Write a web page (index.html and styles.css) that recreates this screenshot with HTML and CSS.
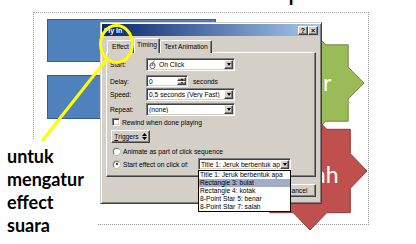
FILE: index.html
```html
<!DOCTYPE html>
<html lang="en">
<head>
    <meta charset="UTF-8">
    <meta name="viewport" content="width=device-width, initial-scale=1.0">
    <title>Fly In</title>
    <link rel="stylesheet" href="styles.css">
</head>
<body>
    <div class="slide">
        <div class="slide-title">Jeruk berbentuk apa</div>
        <div class="slide-frame"></div>
        <div class="rect rect-top"></div>
        <div class="rect rect-bottom"></div>

        <!-- star shapes of the slide, partly hidden by the dialog -->
        <svg class="stars" width="416" height="244" viewBox="0 0 416 244">
            <polygon class="star-green" points="364,83 348.2,67.2 348.2,44.8 325.8,44.8 310,29 294.2,44.8 271.8,44.8 271.8,67.2 256,83 271.8,98.8 271.8,121.2 294.2,121.2 310,137 325.8,121.2 348.2,121.2 348.2,98.8"/>
            <text class="star-text" x="331.5" y="91" text-anchor="end">benar</text>
            <polygon class="star-red" points="367,171 350.3,153.7 350.3,129.3 326.7,129.3 310,112 293.3,129.3 269.7,129.3 269.7,153.7 253,171 269.7,188.3 269.7,212.7 293.3,212.7 310,230 326.7,212.7 350.3,212.7 350.3,188.3"/>
            <text class="star-text" x="338.5" y="183" text-anchor="end">salah</text>
        </svg>

        <div class="dialog">
            <div class="titlebar">
                <span class="title">Fly In</span>
                <span class="title-buttons">
                    <span class="title-btn">?</span>
                    <span class="title-btn">×</span>
                </span>
            </div>
            <div class="tabs">
                <span class="tab tab-effect">Effect</span>
                <span class="tab tab-timing active">Timing</span>
                <span class="tab tab-text">Text Animation</span>
            </div>
            <div class="panel">
                <div class="row row-start">
                    <span class="label">Start:</span>
                    <div class="field select">
                        <svg class="mouse" width="7" height="9" viewBox="0 0 7 9">
                            <path d="M3.5 3 C3.5 1.5 5.5 2 5.5 0.5" fill="none" stroke="#707070"/>
                            <rect x="1" y="3" width="5" height="5.5" rx="2.2" fill="#fff" stroke="#606060"/>
                            <path d="M3.5 3v2.2M1 5.2h5" stroke="#606060" stroke-width="0.8"/>
                        </svg>
                        <span class="value">On Click</span>
                        <span class="drop"><i class="arrow-down"></i></span>
                    </div>
                </div>
                <div class="row row-delay">
                    <span class="label">Delay:</span>
                    <div class="field spin-field">
                        <span class="value">0</span>
                        <span class="spin">
                            <span class="spin-btn"><i class="arrow-up"></i></span>
                            <span class="spin-btn"><i class="arrow-down small"></i></span>
                        </span>
                    </div>
                    <span class="unit">seconds</span>
                </div>
                <div class="row row-speed">
                    <span class="label">Speed:</span>
                    <div class="field select">
                        <span class="value">0,5 seconds (Very Fast)</span>
                        <span class="drop"><i class="arrow-down"></i></span>
                    </div>
                </div>
                <div class="row row-repeat">
                    <span class="label">Repeat:</span>
                    <div class="field select">
                        <span class="value">(none)</span>
                        <span class="drop"><i class="arrow-down"></i></span>
                    </div>
                </div>
                <div class="row row-check">
                    <span class="checkbox"></span>
                    <span>Rewind when done playing</span>
                </div>
                <div class="row row-triggers">
                    <span class="button triggers">
                        <span><u>T</u>riggers</span>
                        <svg width="5" height="7" viewBox="0 0 5 7"><path d="M0 3h5L2.5 0z M0 4h5L2.5 7z"/></svg>
                    </span>
                </div>
                <div class="row row-radio">
                    <span class="radio"></span>
                    <span>Animate as part of click sequence</span>
                </div>
                <div class="row row-radio row-onclick">
                    <span class="radio checked"></span>
                    <span class="radio-label">Start effect on click of:</span>
                    <div class="field select trigger-select">
                        <span class="value">Title 1: Jeruk berbentuk apa</span>
                        <span class="drop"><i class="arrow-down"></i></span>
                        <ul class="dropdown">
                            <li>Title 1: Jeruk berbentuk apa</li>
                            <li class="selected">Rectangle 3: bulat</li>
                            <li>Rectangle 4: kotak</li>
                            <li>8-Point Star 5: benar</li>
                            <li>8-Point Star 7: salah</li>
                        </ul>
                    </div>
                </div>
            </div>
            <div class="actions">
                <span class="button action">OK</span>
                <span class="button action">Cancel</span>
            </div>
        </div>

        <div class="caption">untuk<br>mengatur<br>effect<br>suara</div>

        <!-- yellow highlight drawn over the screenshot -->
        <svg class="marker" width="416" height="244" viewBox="0 0 416 244">
            <ellipse cx="116.5" cy="44" rx="16" ry="18.5"/>
            <line x1="106" y1="60" x2="42" y2="141"/>
        </svg>
    </div>
</body>
</html>
```

FILE: styles.css
```css
* {
    box-sizing: border-box;
}
body {
    margin: 0;
    width: 416px;
    height: 244px;
    overflow: hidden;
    background: #fff;
    font-family: "Liberation Sans", Arial, sans-serif;
}
.slide {
    position: relative;
    width: 416px;
    height: 244px;
}
.slide-title {
    position: absolute;
    left: 75px;
    top: -26px;
    font-family: Lato, sans-serif;
    font-size: 27px;
    line-height: 32px;
    white-space: nowrap;
    color: #000;
}
.slide-frame {
    position: absolute;
    left: 33px;
    top: 12px;
    width: 336px;
    height: 213px;
    border: 1px dotted #9a9a9a;
}
.rect {
    position: absolute;
    left: 47px;
    width: 169px;
    background: #4f81bd;
    border: 1px solid #385d8a;
}
.rect-top {
    top: 19px;
    height: 43px;
}
.rect-bottom {
    top: 75px;
    height: 44px;
}
.stars {
    position: absolute;
    left: 0;
    top: 0;
}
.star-green {
    fill: #9bbb59;
    stroke: #71893f;
}
.star-red {
    fill: #c0504d;
    stroke: #8c3836;
}
.star-text {
    font-family: Lato, sans-serif;
    font-size: 23px;
    fill: #fff;
}

/* dialog */
.dialog {
    position: absolute;
    left: 100px;
    top: 22px;
    width: 222px;
    height: 182px;
    padding: 1px;
    background: #d4d0c8;
    border: 1px solid;
    border-color: #d4d0c8 #404040 #404040 #d4d0c8;
    box-shadow: inset 1px 1px #fff, inset -1px -1px #808080;
    font-size: 6.7px;
    color: #000;
}
.titlebar {
    display: flex;
    align-items: center;
    justify-content: space-between;
    height: 12px;
    padding: 0 2px;
    background: linear-gradient(to right, #0a246a, #a6caf0);
}
.title {
    color: #fff;
    font-weight: bold;
    font-size: 7px;
}
.title-buttons {
    display: flex;
}
.title-btn {
    width: 10px;
    height: 9px;
    display: flex;
    align-items: center;
    justify-content: center;
    background: #d4d0c8;
    border: 1px solid;
    border-color: #fff #404040 #404040 #fff;
    box-shadow: inset -1px -1px #808080;
    font-size: 7px;
    font-weight: bold;
    line-height: 1;
}
.tabs {
    display: flex;
    align-items: flex-end;
    height: 15px;
    margin-top: 2px;
    padding-left: 5px;
}
.tab {
    height: 13px;
    background: #d4d0c8;
    border: 1px solid;
    border-bottom: none;
    border-color: #fff #404040 transparent #fff;
    border-radius: 2px 2px 0 0;
    box-shadow: inset -1px 0 #808080;
    text-align: center;
    line-height: 11px;
}
.tab.active {
    position: relative;
    z-index: 1;
    height: 15px;
    line-height: 12px;
}
.tab-effect {
    width: 27px;
}
.tab-timing {
    width: 26px;
}
.tab-text {
    width: 52px;
}
.panel {
    width: 210px;
    height: 125px;
    margin: -1px 0 0 4px;
    padding: 5px 0 0 3px;
    border: 1px solid;
    border-color: #fff #404040 #404040 #fff;
    box-shadow: inset -1px -1px #808080;
}
.row {
    display: flex;
    align-items: center;
    white-space: nowrap;
}
.label {
    width: 36px;
}
.field {
    position: relative;
    display: flex;
    align-items: center;
    padding: 1px;
    background: #fff;
    border: 1px solid;
    border-color: #808080 #fff #fff #808080;
    box-shadow: inset 1px 1px #404040, inset -1px -1px #d4d0c8;
}
.select {
    width: 89px;
    height: 13px;
}
.value {
    flex: 1;
    overflow: hidden;
    padding-left: 1px;
}
.mouse {
    margin: 0 2px 0 1px;
}
.drop,
.spin-btn,
.button {
    display: flex;
    align-items: center;
    justify-content: center;
    background: #d4d0c8;
    border: 1px solid;
    border-color: #fff #404040 #404040 #fff;
    box-shadow: inset -1px -1px #808080;
}
.drop {
    width: 9px;
    height: 9px;
}
.arrow-down {
    width: 0;
    height: 0;
    border-style: solid;
    border-width: 3px 2.5px 0;
    border-color: #000 transparent transparent;
}
.arrow-up {
    width: 0;
    height: 0;
    border-style: solid;
    border-width: 0 1.5px 2px;
    border-color: transparent transparent #000;
}
.arrow-down.small {
    border-width: 2px 1.5px 0;
}
.row-delay {
    margin-top: 4px;
}
.spin-field {
    width: 42px;
    height: 12px;
}
.spin {
    display: flex;
    flex-direction: column;
}
.spin-btn {
    width: 9px;
    height: 4px;
}
.unit {
    margin-left: 5px;
}
.row-speed {
    margin-top: 1px;
}
.row-repeat {
    margin-top: 2px;
}
.row-check {
    height: 10px;
    margin-top: 1px;
}
.checkbox {
    width: 8px;
    height: 8px;
    margin: 0 2px 0 2px;
    background: #fff;
    border: 1px solid;
    border-color: #808080 #fff #fff #808080;
    box-shadow: inset 1px 1px #404040, inset -1px -1px #d4d0c8;
}
.row-triggers {
    margin-top: 3px;
}
.triggers {
    width: 39px;
    height: 13px;
    margin-left: 1px;
    gap: 3px;
}
.row-radio {
    height: 10px;
    margin-top: 3px;
}
.row-onclick {
    height: 12px;
    margin-top: 2px;
}
.radio {
    position: relative;
    width: 7px;
    height: 7px;
    margin: 0 3px;
    border-radius: 50%;
    background: #fff;
    border: 1px solid;
    border-color: #808080 #fff #fff #808080;
    box-shadow: 0 0 0 0.4px #a0a0a0;
}
.radio.checked::after {
    content: "";
    position: absolute;
    left: 1.5px;
    top: 1.5px;
    width: 2px;
    height: 2px;
    border-radius: 50%;
    background: #000;
}
.radio-label {
    width: 75px;
}
.trigger-select {
    width: 93px;
    height: 12px;
}
.dropdown {
    position: absolute;
    left: -1px;
    top: 11px;
    z-index: 2;
    width: 93px;
    height: 42px;
    margin: 0;
    padding: 0;
    list-style: none;
    background: #fff;
    border: 1px solid #000;
}
.dropdown li {
    height: 8px;
    line-height: 8px;
    padding-left: 1px;
    white-space: nowrap;
    overflow: hidden;
}
.dropdown .selected {
    background: #a2acc8;
}
.actions {
    display: flex;
    justify-content: flex-end;
    gap: 4px;
    margin: 7px 4px 0 0;
}
.action {
    width: 38px;
    height: 13px;
}

/* caption on the slide */
.caption {
    position: absolute;
    left: 0;
    top: 140px;
    width: 97px;
    height: 104px;
    padding: 5px 0 0 7px;
    background: #fff;
    font-family: Lato, sans-serif;
    font-weight: 700;
    font-size: 18px;
    line-height: 23px;
    color: #000;
}
.marker {
    position: absolute;
    left: 0;
    top: 0;
    pointer-events: none;
}
.marker ellipse,
.marker line {
    fill: none;
    stroke: #ffff00;
    stroke-width: 3;
}
```
